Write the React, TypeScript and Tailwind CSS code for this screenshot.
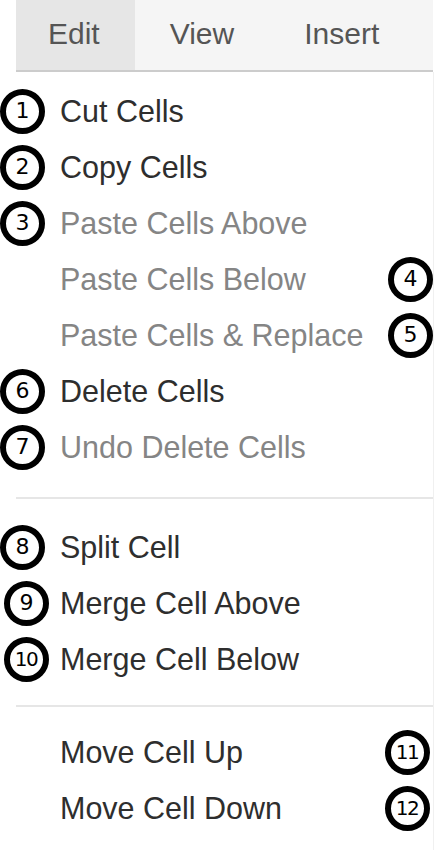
import React from "react";

type Item = { label: string; disabled?: boolean; left?: number; right?: number };

const group1: Item[] = [
  { label: "Cut Cells", left: 1 },
  { label: "Copy Cells", left: 2 },
  { label: "Paste Cells Above", disabled: true, left: 3 },
  { label: "Paste Cells Below", disabled: true, right: 4 },
  { label: "Paste Cells & Replace", disabled: true, right: 5 },
  { label: "Delete Cells", left: 6 },
  { label: "Undo Delete Cells", disabled: true, left: 7 },
];
const group2: Item[] = [
  { label: "Split Cell", left: 8 },
  { label: "Merge Cell Above", left: 9 },
  { label: "Merge Cell Below", left: 10 },
];
const group3: Item[] = [
  { label: "Move Cell Up", right: 11 },
  { label: "Move Cell Down", right: 12 },
];

function Badge({ n, shift }: { n: number; shift?: boolean }) {
  return (
    <div
      className={`w-[45px] h-[45px] rounded-full border-[6px] border-black bg-white flex items-center justify-center leading-none text-black shrink-0 ${
        n >= 10 ? "text-[20px]" : "text-[22px]"
      } ${shift ? "ml-[4px]" : ""}`}
      style={{ fontFamily: '"DejaVu Sans", sans-serif' }}
    >
      <span className={n >= 10 ? "tracking-[-1.5px] -ml-[1px]" : ""}>{n}</span>
    </div>
  );
}

function Row({ item }: { item: Item }) {
  return (
    <div className="flex items-center h-[56px] -ml-[16px]">
      <div className="w-[46px] h-[56px] flex items-center shrink-0">
        {item.left !== undefined && <Badge n={item.left} shift={item.left >= 9} />}
      </div>
      <span
        className={`ml-[14px] text-[30.5px] leading-none whitespace-nowrap ${
          item.disabled ? "text-[#858585]" : "text-[#2e2e2e]"
        }`}
      >
        {item.label}
      </span>
      {item.right !== undefined && (
        <div className={`ml-auto ${item.right >= 11 ? "mr-[3px]" : ""}`}>
          <Badge n={item.right} />
        </div>
      )}
    </div>
  );
}

export default function App() {
  return (
    <div
      className="w-[442px] h-[850px] bg-white overflow-hidden"
      style={{ fontFamily: '"Liberation Sans", Arial, sans-serif' }}
    >
      <div className="ml-[16px] w-[417px] h-[72px] bg-[#f5f5f5] border-b-2 border-[#cccccc] flex items-stretch">
        <div className="bg-[#e6e6e6] pl-[32px] pr-[35px] flex items-center pb-[3px] text-[30px] text-[#555555]">
          Edit
        </div>
        <div className="px-[35px] flex items-center pb-[3px] text-[30px] text-[#555555]">View</div>
        <div className="px-[35px] flex items-center pb-[3px] text-[30px] text-[#555555]">Insert</div>
      </div>
      <div className="ml-[16px] w-[418px] border-r border-[#f0f0f0] pt-[11px] h-[778px]">
        {group1.map((it) => (
          <Row key={it.label} item={it} />
        ))}
        <div className="mt-[22px] mb-[20px] h-[2px] bg-[#e6e6e6]" />
        {group2.map((it) => (
          <Row key={it.label} item={it} />
        ))}
        <div className="mt-[18px] mb-[17px] h-[2px] bg-[#e6e6e6]" />
        {group3.map((it) => (
          <Row key={it.label} item={it} />
        ))}
      </div>
    </div>
  );
}
